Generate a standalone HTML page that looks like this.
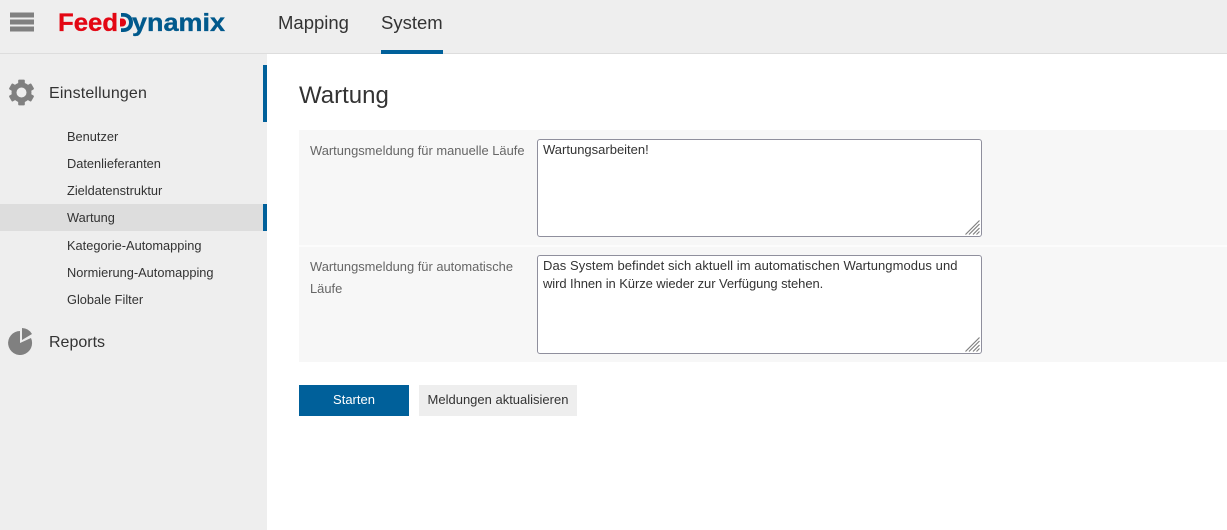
<!DOCTYPE html>
<html lang="de">
<head>
<meta charset="utf-8">
<title>Wartung</title>
<style>
html,body{margin:0;padding:0;width:1227px;height:530px;overflow:hidden;background:#fff;font-family:"Liberation Sans",sans-serif;color:#333}
.a{position:absolute;white-space:nowrap}
#hd{left:0;top:0;width:1227px;height:53px;background:#eee;border-bottom:1px solid #ddd}
#sb{left:0;top:54px;width:267px;height:476px;background:#eee}
.nav{font-size:18.5px;line-height:23px;top:11px;color:#333}
.side{font-size:16px;line-height:20px;left:49px;color:#333}
.lnk{font-size:12.8px;line-height:16px;left:67px;color:#333}
.row{left:299px;width:928px;background:#f7f7f7}
.lab{left:310px;font-size:12.9px;line-height:22px;color:#666;white-space:normal;width:220px}
.ta{left:537px;width:443px;background:#fff;border:1px solid #8f8f9d;border-radius:3px;font-size:13px;line-height:18px;color:#333}
.ta span{position:absolute;left:5px;white-space:nowrap}
.ta svg{position:absolute;right:1px;bottom:1px}
.btn{top:385px;height:31px;font-size:13px;line-height:29px;text-align:center}
.logo{font-size:25px;line-height:30px;font-weight:bold;transform-origin:0 0;-webkit-text-stroke:.35px currentColor}
</style>
</head>
<body>
<div class="a" id="hd"></div>
<div class="a" id="sb"></div>

<svg class="a" style="left:10px;top:12px" width="24" height="20" viewBox="0 0 24 20">
<rect x="0" y="0.5" width="24" height="5" fill="#808080"/>
<rect x="0" y="7.5" width="24" height="5" fill="#808080"/>
<rect x="0" y="14.5" width="24" height="5" fill="#808080"/>
</svg>

<div class="a logo" style="left:58px;top:8px;color:#e30613;transform:scaleX(1.03)">Feed</div>
<svg class="a" style="left:120px;top:13px" width="13" height="19" viewBox="0 0 13 19">
<path d="M1 0H3.500C9 0 13 3.800 13 9.500C13 15.200 9 19 3.500 19H1V15.200H3.500C6.900 15.200 9 12.800 9 9.500C9 6.200 6.900 3.800 3.500 3.800H1Z" fill="#00598c"/>
<path d="M0 5.500H2C4.400 5.500 6 7.200 6 9.500C6 11.800 4.400 13.500 2 13.500H0Z" fill="#e30613"/>
</svg>
<div class="a logo" style="left:132px;top:8px;color:#00598c;transform:scaleX(1.08)">ynamix</div>

<div class="a nav" style="left:278px">Mapping</div>
<div class="a nav" style="left:381px">System</div>
<div class="a" style="left:381px;top:50px;width:62px;height:4px;background:#00609a"></div>

<div class="a" style="left:263px;top:65px;width:4px;height:57px;background:#00609a"></div>
<svg class="a" style="left:8px;top:79px" width="27" height="27" viewBox="0 0 27 27">
<g fill="#808080" transform="translate(13.500 13.500) scale(.95)">
<circle r="10.500"/>
<rect x="-3.500" y="-13.500" width="7" height="27" rx="1"/>
<rect x="-3.500" y="-13.500" width="7" height="27" rx="1" transform="rotate(60)"/>
<rect x="-3.500" y="-13.500" width="7" height="27" rx="1" transform="rotate(120)"/>
</g>
<circle cx="13.500" cy="13.500" r="5" fill="#eee"/>
</svg>
<div class="a side" style="top:82px;letter-spacing:.15px;top:84px">Einstellungen</div>

<div class="a lnk" style="top:129px">Benutzer</div>
<div class="a lnk" style="top:156px">Datenlieferanten</div>
<div class="a lnk" style="top:183px">Zieldatenstruktur</div>
<div class="a" style="left:0;top:204px;width:263px;height:27px;background:#ddd"></div>
<div class="a" style="left:263px;top:204px;width:4px;height:27px;background:#00609a"></div>
<div class="a lnk" style="top:210px">Wartung</div>
<div class="a lnk" style="top:238px">Kategorie-Automapping</div>
<div class="a lnk" style="top:265px">Normierung-Automapping</div>
<div class="a lnk" style="top:292px">Globale Filter</div>

<svg class="a" style="left:0;top:320px" width="40" height="40" viewBox="0 0 40 40">
<path fill="#808080" d="M20 11V23L31 18A12 12 0 1 1 20 11Z"/>
<path fill="#808080" d="M22 8A12 12 0 0 1 32 14L22 20Z"/>
</svg>
<div class="a side" style="top:333px">Reports</div>

<div class="a" style="left:299px;top:82px;font-size:24px;line-height:28px;color:#333">Wartung</div>

<div class="a row" style="top:130px;height:115px"></div>
<div class="a" style="left:299px;top:245px;width:928px;height:2px;background:#fcfcfc"></div>
<div class="a row" style="top:247px;height:115px"></div>

<div class="a lab" style="top:140px">Wartungsmeldung für manuelle Läufe</div>
<div class="a ta" style="top:139px;height:96px">
<span style="top:1px">Wartungsarbeiten!</span>
<svg width="15" height="15" viewBox="0 0 15 15"><path d="M14.500 0.500L0.500 14.500M14.500 4L4 14.500M14.500 8L8 14.500M14.500 11.500L11.500 14.500" stroke="#808080" stroke-width="1.200" fill="none"/></svg>
</div>

<div class="a lab" style="top:256px">Wartungsmeldung für automatische Läufe</div>
<div class="a ta" style="top:255px;height:97px">
<span style="top:1px;letter-spacing:.07px">Das System befindet sich aktuell im automatischen Wartungmodus und</span>
<span style="top:19px;letter-spacing:-.08px">wird Ihnen in Kürze wieder zur Verfügung stehen.</span>
<svg width="15" height="15" viewBox="0 0 15 15"><path d="M14.500 0.500L0.500 14.500M14.500 4L4 14.500M14.500 8L8 14.500M14.500 11.500L11.500 14.500" stroke="#808080" stroke-width="1.200" fill="none"/></svg>
</div>

<div class="a btn" style="left:299px;width:110px;background:#00609a;color:#fff">Starten</div>
<div class="a btn" style="left:419px;width:158px;background:#eee;color:#333">Meldungen aktualisieren</div>
</body>
</html>
